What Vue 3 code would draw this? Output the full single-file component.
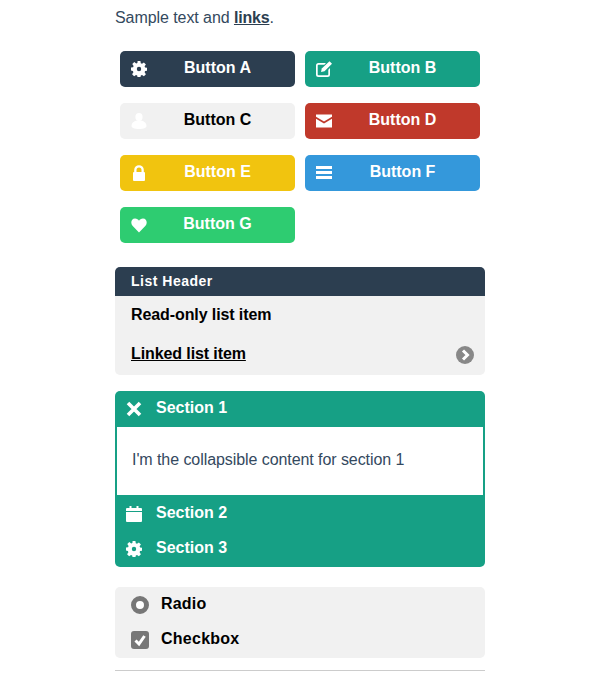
<script setup>
const gear = 'M6.600 0h2.800l.4 2.200 1.200.5 1.900-1.300 2 2-1.300 1.900.5 1.200 2.200.4v2.800l-2.200.4-.5 1.200 1.300 1.900-2 2-1.900-1.300-1.200.5-.4 2.200H6.600l-.4-2.200-1.200-.5-1.900 1.300-2-2 1.300-1.900-.5-1.200L-.1 9.400V6.600l2.200-.4.5-1.200-1.300-1.900 2-2 1.900 1.300 1.200-.5zM8 5.800a2.200 2.200 0 1 0 0 4.400 2.200 2.200 0 0 0 0-4.400z'
const buttons = [
  { label: 'Button A', cls: 'navy', icon: 'gear' },
  { label: 'Button B', cls: 'teal', icon: 'edit' },
  { label: 'Button C', cls: 'light', icon: 'user' },
  { label: 'Button D', cls: 'red', icon: 'mail' },
  { label: 'Button E', cls: 'yellow', icon: 'lock' },
  { label: 'Button F', cls: 'blue', icon: 'bars' },
  { label: 'Button G', cls: 'green', icon: 'heart' }
]
</script>

<template>
  <main class="page">
    <p class="intro">Sample text and <a href="#">links</a>.</p>

    <div class="button-grid">
      <a v-for="b in buttons" :key="b.label" href="#" class="btn" :class="b.cls">
        <svg class="btn-icon" viewBox="0 0 16 16" fill="#fff">
          <path v-if="b.icon === 'gear'" fill-rule="evenodd" :d="gear" />
          <g v-else-if="b.icon === 'edit'">
            <path fill-rule="evenodd" d="M2.500 2H10L8.300 3.700H2.500a.8.8 0 0 0-.8.8v9a.8.8 0 0 0 .8.8h9a.8.8 0 0 0 .8-.8V8.700L14 7v6.500a2.500 2.500 0 0 1-2.500 2.500h-9A2.500 2.500 0 0 1 0 13.500v-9A2.500 2.500 0 0 1 2.500 2z" />
            <path d="M13.500.3 16 2.800 8.500 10.300l-3.500.8.800-3.500z" />
          </g>
          <g v-else-if="b.icon === 'user'">
            <ellipse cx="8" cy="4" rx="3.600" ry="4" />
            <path d="M.5 13c0-3.500 3-5.500 7.500-5.500s7.500 2 7.500 5.500c0 2-3 3-7.500 3S.5 15 .5 13z" />
          </g>
          <g v-else-if="b.icon === 'mail'">
            <path d="M0 1.500h16v2.200L8 8.500 0 3.700z" />
            <path d="M0 5.700l8 4.800 8-4.800V14.500H0z" />
          </g>
          <path v-else-if="b.icon === 'lock'" fill-rule="evenodd" d="M3.200 7V5a4.800 4.800 0 0 1 9.600 0v2h.2a1 1 0 0 1 1 1v7a1 1 0 0 1-1 1H3a1 1 0 0 1-1-1V8a1 1 0 0 1 1-1zM5.500 7h5V5a2.500 2.500 0 0 0-5 0z" />
          <g v-else-if="b.icon === 'bars'">
            <rect x="0" y="1" width="16" height="3" />
            <rect x="0" y="6" width="16" height="3" />
            <rect x="0" y="11" width="16" height="3" />
          </g>
          <path v-else d="M8 15.500 1.500 8.800C-.8 6.300.3 1.500 4 1.500c2 0 3.200 1 4 2.200.8-1.200 2-2.200 4-2.200 3.700 0 4.800 4.800 2.500 7.300z" />
        </svg>
        <span>{{ b.label }}</span>
      </a>
    </div>

    <section class="list">
      <h3 class="list-header">List Header</h3>
      <div class="list-item">Read-only list item</div>
      <a href="#" class="list-item linked">
        <span>Linked list item</span>
        <svg class="chevron" viewBox="0 0 18 18">
          <circle cx="9" cy="9" r="9" fill="#888" />
          <path d="M7 4.500 11.500 9 7 13.500" fill="none" stroke="#fff" stroke-width="3" />
        </svg>
      </a>
    </section>

    <section class="accordion">
      <div class="acc-head">
        <svg class="acc-icon" viewBox="0 0 16 16"><path d="M2 2l12 12M14 2 2 14" stroke="#fff" stroke-width="3.600" fill="none" /></svg>
        <span>Section 1</span>
      </div>
      <div class="acc-body">I'm the collapsible content for section 1</div>
      <div class="acc-head lowered">
        <svg class="acc-icon" viewBox="0 0 16 16" fill="#fff">
          <rect x="3.500" y="0" width="2" height="3" />
          <rect x="10.500" y="0" width="2" height="3" />
          <path d="M1 2h14a1 1 0 0 1 1 1v2H0V3a1 1 0 0 1 1-1z" />
          <path d="M0 6h16v9a1 1 0 0 1-1 1H1a1 1 0 0 1-1-1z" />
        </svg>
        <span>Section 2</span>
      </div>
      <div class="acc-head">
        <svg class="acc-icon" viewBox="0 0 16 16" fill="#fff"><path fill-rule="evenodd" :d="gear" /></svg>
        <span>Section 3</span>
      </div>
    </section>

    <form class="options" @submit.prevent>
      <label class="option">
        <span class="radio"></span>
        <span class="opt-label radio-label">Radio</span>
      </label>
      <label class="option">
        <span class="checkbox">
          <svg viewBox="0 0 18 18"><path d="M4.500 9.500 8 13l5.500-8" fill="none" stroke="#fff" stroke-width="3" /></svg>
        </span>
        <span class="opt-label check-label">Checkbox</span>
      </label>
    </form>

    <hr class="rule" />
  </main>
</template>

<style>
html, body { margin: 0; background: #fff; }
</style>

<style scoped>
.page {
  width: 370px;
  margin: 0 auto;
  padding-top: 8px;
  font-family: "Liberation Sans", Arial, sans-serif;
  font-size: 16px;
  color: #34495e;
}
.intro { margin: 0 0 24px; line-height: 19px; letter-spacing: -0.07px; }
.intro a { color: #2c3e50; font-weight: 700; letter-spacing: -0.2px; }

.button-grid {
  display: grid;
  grid-template-columns: 175px 175px;
  column-gap: 10px;
  row-gap: 16px;
  padding: 0 5px;
  margin-bottom: 24px;
}
.btn {
  display: block;
  position: relative;
  height: 36px;
  line-height: 34px;
  border-radius: 5px;
  padding-left: 20px;
  text-align: center;
  font-weight: 700;
  text-decoration: none;
  color: #fff;
}
.btn-icon { position: absolute; left: 11px; top: 10px; width: 16px; height: 16px; }
.navy { background: #2c3e50; }
.teal { background: #16a085; }
.light { background: #f1f1f1; color: #000; }
.red { background: #c0392b; }
.yellow { background: #f1c40f; }
.blue { background: #3498db; }
.green { background: #2ecc71; }

.list {
  background: #f1f1f1;
  border-radius: 5px;
  overflow: hidden;
  margin-bottom: 16px;
}
.list-header {
  margin: 0;
  height: 29px;
  line-height: 29px;
  padding: 0 16px;
  background: #2c3e50;
  color: #fff;
  font-size: 14px;
  font-weight: 700;
  letter-spacing: 0.5px;
}
.list-item {
  display: block;
  position: relative;
  height: 39px;
  line-height: 38px;
  padding: 0 16px;
  font-weight: 700;
  color: #000;
  letter-spacing: -0.1px;
}
.linked { height: 40px; text-decoration: none; }
.linked span { text-decoration: underline; }
.chevron { position: absolute; right: 11px; top: 11px; width: 18px; height: 18px; }

.accordion {
  background: #16a085;
  border-radius: 5px;
  overflow: hidden;
  margin-bottom: 20px;
}
.acc-head {
  position: relative;
  height: 36px;
  line-height: 33px;
  padding-left: 41px;
  font-weight: 700;
  color: #fff;
}
.acc-head.lowered { line-height: 35px; }
.acc-icon { position: absolute; left: 11px; top: 10px; width: 16px; height: 16px; }
.acc-head.lowered .acc-icon { top: 11px; }
.acc-body {
  box-sizing: border-box;
  height: 68px;
  margin: 0 2px;
  padding: 0 15px;
  line-height: 65px;
  background: #fff;
  color: #34495e;
  letter-spacing: -0.07px;
}

.options {
  background: #f1f1f1;
  border-radius: 5px;
  height: 71px;
}
.option {
  display: flex;
  align-items: center;
  height: 35px;
  padding-left: 16px;
  font-weight: 700;
  color: #000;
  gap: 12px;
}
.opt-label { margin-bottom: 2px; }
.radio-label { letter-spacing: 0.2px; }
.check-label { letter-spacing: 0.25px; }
.radio {
  box-sizing: border-box;
  width: 18px;
  height: 18px;
  border-radius: 50%;
  background: #fff;
  border: 5px solid #777;
}
.checkbox {
  width: 18px;
  height: 18px;
  border-radius: 3px;
  background: #777;
  display: block;
}
.checkbox svg { display: block; width: 18px; height: 18px; }
.rule {
  margin: 12px 0 0;
  border: 0;
  border-top: 1px solid #ccc;
}
</style>
